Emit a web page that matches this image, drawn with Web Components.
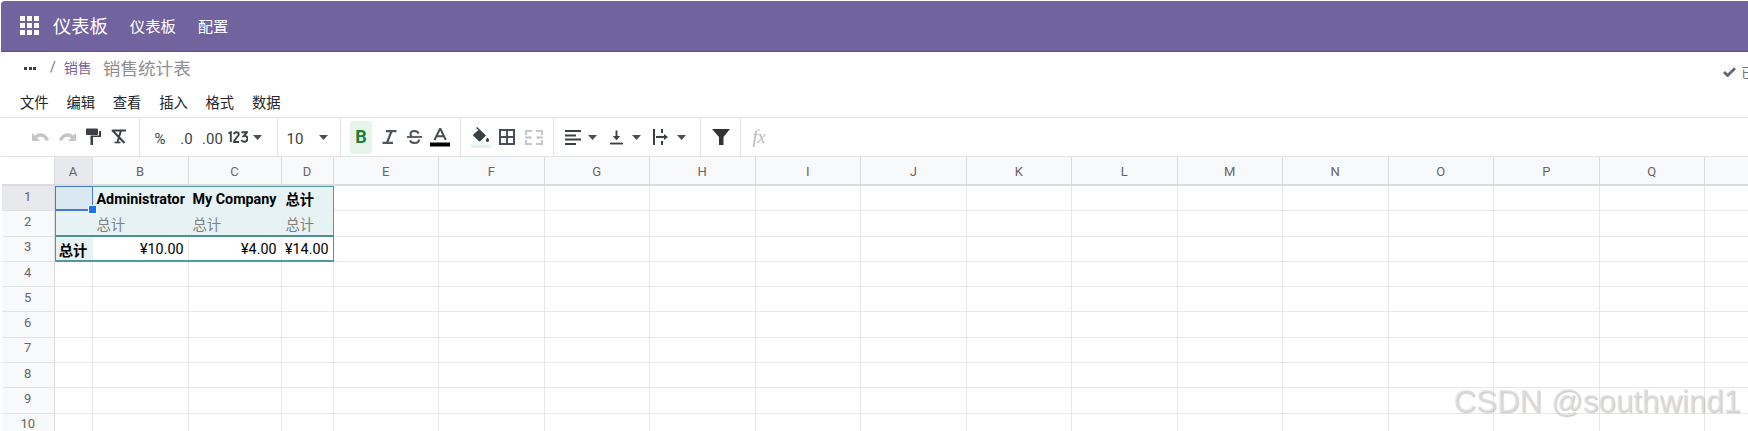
<!DOCTYPE html>
<html lang="zh">
<head>
<meta charset="utf-8">
<title>销售统计表</title>
<style>
  html, body { margin: 0; height: 431px; overflow: hidden; background: #fff; }
  body { font-family: Roboto, "Noto Sans CJK SC", sans-serif; color: #212529; }
  #app { position: relative; display: flex; flex-direction: column; height: 431px; overflow: hidden; }
</style>
</head>
<body>
<div id="app">
  <top-nav>
    <span slot="brand">仪表板</span>
    <span>仪表板</span>
    <span>配置</span>
  </top-nav>
  <bread-crumbs parent="销售" title="销售统计表" status="已"></bread-crumbs>
  <menu-bar items="文件,编辑,查看,插入,格式,数据"></menu-bar>
  <tool-bar></tool-bar>
  <sheet-grid></sheet-grid>
  <water-mark>CSDN @southwind1</water-mark>
</div>

<script>
class TopNav extends HTMLElement {
  constructor() {
    super();
    this.attachShadow({ mode: "open" }).innerHTML = `
    <style>
      :host { display: block; padding: 1px 0 0 1px; flex: none; }
      nav { display: flex; align-items: center; height: 50px; background: #71639e; border-bottom: 1px solid #5f5386;
        border-top-left-radius: 4px; color: #fff; padding-left: 19px; box-sizing: content-box; }
      .apps { display: grid; grid-template-columns: repeat(3, 5px); grid-auto-rows: 5px; gap: 2px; margin-right: 14px; margin-top: -1px; }
      .apps i { background: #fff; }
      .brand { font-size: 18.3px; margin: -2px 22px 0 0; }
      .items { display: flex; gap: 22px; font-size: 15.3px; margin-top: -2px; }
    </style>
    <nav>
      <div class="apps"><i></i><i></i><i></i><i></i><i></i><i></i><i></i><i></i><i></i></div>
      <div class="brand"><slot name="brand"></slot></div>
      <div class="items"><slot></slot></div>
    </nav>`;
  }
}
customElements.define("top-nav", TopNav);

class BreadCrumbs extends HTMLElement {
  connectedCallback() {
    this.attachShadow({ mode: "open" }).innerHTML = `
    <style>
      :host { display: flex; align-items: center; height: 30px; flex: none; padding-left: 24px; overflow: hidden; }
      .dots { display: flex; gap: 1.5px; margin-top: 2px; }
      .dots i { width: 3px; height: 3px; background: #3b3f46; }
      .sep { color: #6c757d; margin: 0 8px 0 14px; font-size: 14px; }
      .parent { color: #71639e; font-size: 14px; margin-right: 11px; }
      .title { color: #8f8f8f; font-size: 17.6px; }
      .saved { margin-left: auto; color: #6c757d; font-size: 14px; display: flex; align-items: center; gap: 5px;
        width: 25px; flex: none; white-space: nowrap; margin-top: 9px; }
      svg { flex: none; }
    </style>
    <div class="dots"><i></i><i></i><i></i></div>
    <span class="sep">/</span>
    <span class="parent">${this.getAttribute("parent")}</span>
    <span class="title">${this.getAttribute("title")}</span>
    <div class="saved">
      <svg width="13" height="11" viewBox="0 0 13 11"><path d="M1 6l3.600 3.600L12 2.200" fill="none" stroke="#5f6a76" stroke-width="2.800"/></svg>
      <span>${this.getAttribute("status")}</span>
    </div>`;
  }
}
customElements.define("bread-crumbs", BreadCrumbs);

class MenuBar extends HTMLElement {
  connectedCallback() {
    const items = this.getAttribute("items").split(",").map(t => `<span>${t}</span>`).join("");
    this.attachShadow({ mode: "open" }).innerHTML = `
    <style>
      :host { display: flex; align-items: center; gap: 17.8px; height: 35px; flex: none; padding: 4px 0 0 20px; box-sizing: border-box; font-size: 14.3px; color: #212529; }
    </style>${items}`;
  }
}
customElements.define("menu-bar", MenuBar);

// one toolbar icon / label, --w is its width, --ml the space before it
class ToolBtn extends HTMLElement {
  constructor() {
    super();
    this.attachShadow({ mode: "open" }).innerHTML = `
    <style>
      :host { display: flex; align-items: center; justify-content: center; flex: none; height: 38px;
        width: var(--w, 18px); margin-left: var(--ml, 0); color: #3b3f46; font-size: 14.3px; }
      :host([on]) { background: #e6f4ea; color: #188038; height: 33px; border-radius: 3px; }
    </style><slot></slot>`;
  }
}
customElements.define("tool-btn", ToolBtn);

const caret = ml => `<tool-btn style="--w:9px;--ml:${ml}px"><svg width="9" height="5" viewBox="0 0 9 5"><path d="M0 0h9L4.500 5z" fill="#4a4f57"/></svg></tool-btn>`;

class ToolBar extends HTMLElement {
  constructor() {
    super();
    this.attachShadow({ mode: "open" }).innerHTML = `
    <style>
      :host { display: flex; flex: none; margin-left: 1px; border-top: 1px solid #e2e3e3; border-bottom: 1px solid #e2e3e3; box-sizing: border-box; height: 40px; }
      .g { display: flex; align-items: center; flex: none; border-right: 1px solid #e2e3e3; box-sizing: border-box; height: 38px; }
    </style>
    <div class="g" style="width:139px">
      <tool-btn style="--w:18px;--ml:31px"><svg width="18" height="10" viewBox="0 0 18 10"><path d="M0 1v8h8L5 6c3-2.500 7-1.500 9 3l3-1C15 2 8-1 3 3.500z" fill="#c4c6c9"/></svg></tool-btn>
      <tool-btn style="--w:18px;--ml:8px"><svg width="18" height="10" viewBox="0 0 18 10"><path d="M18 1v8h-8l3-3C10 3.500 6 4.500 4 9L1 8C3 2 10-1 15 3.500z" fill="#c4c6c9"/></svg></tool-btn>
      <tool-btn style="--w:15px;--ml:10px;margin-top:-1px"><svg width="15" height="17" viewBox="0 0 15 17"><path d="M0 1.500a1 1 0 0 1 1-1h10a1 1 0 0 1 1 1V6a1 1 0 0 1-1 1H1a1 1 0 0 1-1-1z" fill="#3b3f46"/><path d="M13 3h2v6H7v8H4.500V7.500h8.500z" fill="#3b3f46"/></svg></tool-btn>
      <tool-btn style="--w:16px;--ml:10px;margin-top:-1px"><svg width="16" height="15" viewBox="0 0 16 15"><path d="M2.500 1.500H15M10 1.500L6.500 13M1 1l12.500 13" fill="none" stroke="#3b3f46" stroke-width="2"/><path d="M3.500 13.500h6" stroke="#3b3f46" stroke-width="1.600"/></svg></tool-btn>
    </div>
    <div class="g" style="width:138px">
      <tool-btn style="--w:12px;--ml:14px;margin-top:3px;font-size:15px">%</tool-btn>
      <tool-btn style="--w:11px;--ml:15px;margin-top:3px;font-size:15px">.0</tool-btn>
      <tool-btn style="--w:19px;--ml:11px;margin-top:3px;font-size:15px">.00</tool-btn>
      <tool-btn style="--w:20px;--ml:6px;margin-top:-1px"><svg width="20" height="12" viewBox="0 0 20 12"><path d="M.500 2.500L2.800 1.200V11M6 3.200C6.500.6 10.800.6 10.800 3.200 10.800 5.500 6 8 6 11h5M13.500 1.200H19L15.800 5c2.200-.4 3.700.8 3.700 2.800 0 3.500-5 3.800-6.200 1.400" fill="none" stroke="#3b3f46" stroke-width="1.900"/></svg></tool-btn>
      ${caret(5)}
    </div>
    <div class="g" style="width:63px">
      <tool-btn style="--w:16px;--ml:9px;margin-top:3px;font-size:15px">10</tool-btn>
      ${caret(16)}
    </div>
    <div class="g" style="width:120px">
      <tool-btn on style="--w:22px;--ml:9px"><b style="font-size:18px;line-height:1">B</b></tool-btn>
      <tool-btn style="--w:15px;--ml:10px"><svg width="15" height="14" viewBox="0 0 15 14"><path d="M4 1.200h10.500M.5 12.800h10.500M9.500 1.200L5 12.800" fill="none" stroke="#4f535b" stroke-width="2.300"/></svg></tool-btn>
      <tool-btn style="--w:15px;--ml:10px"><svg width="15" height="14" viewBox="0 0 15 14"><path d="M0 7h15" stroke="#4f535b" stroke-width="1.800"/><path d="M11.500 3.600C11 2 9.500 1 7.500 1 5 1 3.500 2.400 3.500 4c0 1 .5 2 1.500 3M12 9.500C12 12 10 13 7.500 13 5 13 3.500 12 3 10.400" fill="none" stroke="#4f535b" stroke-width="2"/></svg></tool-btn>
      <tool-btn style="--w:20px;--ml:8px"><svg width="20" height="19" viewBox="0 0 20 19"><path d="M4.500 12L10 .8h.4L15.800 12M6.500 8.200h7.500" fill="none" stroke="#4a4e55" stroke-width="2"/><rect y="14.500" width="20" height="4" fill="#000"/></svg></tool-btn>
    </div>
    <div class="g" style="width:93px">
      <tool-btn style="--w:20px;--ml:10px"><svg width="20" height="21" viewBox="0 0 20 21"><path d="M5 1l1.200-1L15 8.500 9.500 14a1.200 1.200 0 0 1-1.700 0L2.500 9a1.200 1.200 0 0 1 0-1.700L7.500 3z" fill="#3b3f46"/><path d="M16.500 10.500c1 1.400 1.700 2 1.700 2.800a1.700 1.700 0 0 1-3.400 0c0-.8.700-1.400 1.700-2.800z" fill="#3b3f46"/><rect y="17.500" width="20" height="3.500" fill="#e6f0f1"/></svg></tool-btn>
      <tool-btn style="--w:16px;--ml:8px"><svg width="16" height="16" viewBox="0 0 16 16"><path d="M1 1h14v14H1zM8 1v14M1 8h14" fill="none" stroke="#4a4e55" stroke-width="2"/></svg></tool-btn>
      <tool-btn style="--w:18px;--ml:10px"><svg width="18" height="15" viewBox="0 0 18 15"><path d="M1 5V1h6M11 1h6v4M1 10v4h6M11 14h6v-4M0 7.500h6M18 7.500h-6" fill="none" stroke="#c4c6c9" stroke-width="2"/><path d="M4.500 5.500l2.500 2-2.500 2zM13.500 5.500l-2.500 2 2.500 2z" fill="#c4c6c9"/></svg></tool-btn>
    </div>
    <div class="g" style="width:147px">
      <tool-btn style="--w:16px;--ml:11px"><svg width="16" height="15" viewBox="0 0 16 15"><path d="M0 1h16M0 5.500h11M0 9.500h16M0 14h11" stroke="#3b3f46" stroke-width="2"/></svg></tool-btn>
      ${caret(7)}
      <tool-btn style="--w:13px;--ml:13px"><svg width="14" height="15" viewBox="0 0 14 15"><path d="M7 0v9" stroke="#3b3f46" stroke-width="2"/><path d="M3 6h8L7 10.500z" fill="#3b3f46"/><path d="M0 14h14" stroke="#3b3f46" stroke-width="2"/></svg></tool-btn>
      ${caret(9)}
      <tool-btn style="--w:15px;--ml:12px"><svg width="15" height="16" viewBox="0 0 15 16"><path d="M1 0v16M9 0v4M9 12v4M3 8h10" fill="none" stroke="#3b3f46" stroke-width="2"/><path d="M11 5l4 3-4 3z" fill="#3b3f46"/></svg></tool-btn>
      ${caret(9)}
    </div>
    <div class="g" style="width:40px">
      <tool-btn style="--w:18px;--ml:11px"><svg width="18" height="16" viewBox="0 0 18 16"><path d="M0 0h18l-6.500 8v8H7V8z" fill="#333"/></svg></tool-btn>
    </div>
    <tool-btn style="--w:18px;--ml:9px"><span style="font-family:'Liberation Serif',serif;font-style:italic;color:#b9b9b9;font-size:18px">fx</span></tool-btn>`;
  }
}
customElements.define("tool-bar", ToolBar);

class SheetGrid extends HTMLElement {
  connectedCallback() {
    const cols = "ABCDEFGHIJKLMNOPQ".split("");
    const widths = [38, 96, 93, 52].concat(cols.slice(4).map(() => 105.5));
    const rowCount = 10;
    const data = {
      "B1": ["Administrator", "b"], "C1": ["My Company", "b"], "D1": ["总计", "b"],
      "B2": ["总计", "m"], "C2": ["总计", "m"], "D2": ["总计", "m"],
      "A3": ["总计", "b c"], "B3": ["¥10.00", "r"], "C3": ["¥4.00", "r"], "D3": ["¥14.00", "r"]
    };
    let html = `<div class="corner"></div>`;
    cols.forEach(c => {
      html += `<div class="ch${c === "A" ? " act" : ""}">${c}</div>`;
    });
    html += `<div class="ch"></div>`;
    for (let r = 1; r <= rowCount; r++) {
      html += `<div class="rh${r === 1 ? " act" : ""}">${r}</div>`;
      cols.forEach((c, i) => {
        const d = data[c + r];
        const tint = i < 4 && (r <= 2 || (r === 3 && i === 0)) ? " tint" : "";
        html += `<div class="cell${tint} ${d ? d[1] : ""}">${d ? d[0] : ""}</div>`;
      });
      html += `<div class="cell"></div>`;
    }
    this.attachShadow({ mode: "open" }).innerHTML = `
    <style>
      :host { display: block; flex: 1; overflow: hidden; margin-left: 2px; }
      .grid { display: grid; position: relative; width: max-content;
        grid-template-columns: 52.5px ${widths.map(w => w + "px").join(" ")} 105.5px;
        grid-template-rows: 29px repeat(${rowCount}, 25.3px); font-size: 14.3px; }
      .corner { background: #fff; border-right: 1px solid #dcdcdc; border-bottom: 2px solid #dcdcdc; box-sizing: border-box; }
      .ch, .rh { display: flex; align-items: center; justify-content: center; background: #f8f9fa; color: #666; font-size: 13px; box-sizing: border-box; }
      .ch { border-right: 1px solid #dcdcdc; border-bottom: 2px solid #dcdcdc; padding-top: 1px; }
      .rh { border-right: 1px solid #dcdcdc; border-bottom: 1px solid #e2e3e3; padding-bottom: 4px; }
      .act { background: #e7e9ec; }
      .cell { display: flex; align-items: center; box-sizing: border-box; border-right: 1px solid #e8e8e8; border-bottom: 1px solid #e8e8e8;
        padding: 1px 4px 0 4px; white-space: nowrap; color: #000; }
      .tint { background: #e6f2f3; border-color: #e6f2f3; }
      .b { font-weight: 700; }
      .c { justify-content: center; padding: 1px 0 0; }
      .m { color: #808080; }
      .r { justify-content: flex-end; }
      /* overlays on the pivot range, each one sits on its own grid area */
      .zone, .line, .sel { position: absolute; inset: 0; box-sizing: border-box; }
      .zone { grid-column: 2 / 6; grid-row: 2 / 5; border: 1px solid #4f9a9c; border-bottom-width: 2px; border-right-width: 1.5px; }
      .line { grid-column: 2 / 6; grid-row: 3 / 4; top: auto; height: 2px; background: #4f8f90; }
      .sel { grid-column: 2 / 3; grid-row: 2 / 3; background: rgba(60, 120, 220, .08); border: 1px solid #4a78d8; border-bottom-width: 2px; }
      .handle { position: absolute; right: -5px; bottom: -5px; width: 7px; height: 7px; background: #1a73e8; border: 1px solid #fff; }
    </style>
    <div class="grid">
      ${html}
      <div class="zone"></div>
      <div class="line"></div>
      <div class="sel"><div class="handle"></div></div>
    </div>`;
  }
}
customElements.define("sheet-grid", SheetGrid);

class WaterMark extends HTMLElement {
  constructor() {
    super();
    this.attachShadow({ mode: "open" }).innerHTML = `
    <style>
      :host { position: absolute; right: 7px; bottom: 11px; font-family: "Liberation Sans", sans-serif; font-size: 31.3px; line-height: 36px;
        color: rgba(225, 225, 225, .7); text-shadow: 1px 1px 1px rgba(120, 120, 120, .4); white-space: nowrap; }
    </style><slot></slot>`;
  }
}
customElements.define("water-mark", WaterMark);
</script>
</body>
</html>
